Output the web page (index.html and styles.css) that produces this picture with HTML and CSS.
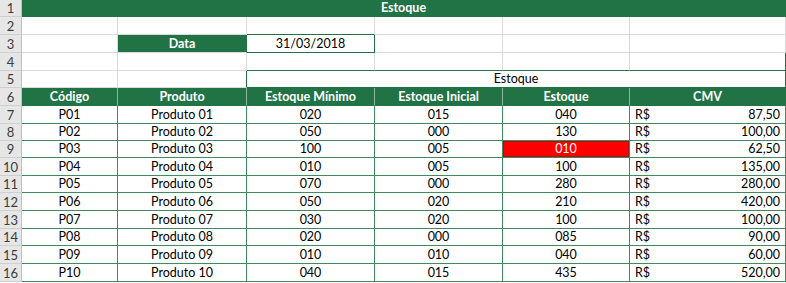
FILE: index.html
```html
<!DOCTYPE html>
<html lang="pt">
<head>
<meta charset="utf-8">
<title>Estoque</title>
<link rel="stylesheet" href="styles.css">
</head>
<body>
<div class="sheet">
  <div class="rh">1</div>
  <div class="c title span6">Estoque</div>

  <div class="rh">2</div>
  <div class="c"></div><div class="c"></div><div class="c gb"></div><div class="c"></div><div class="c"></div><div class="c last"></div>

  <div class="rh">3</div>
  <div class="c"></div>
  <div class="c label">Data</div>
  <div class="c date">31/03/2018</div>
  <div class="c"></div><div class="c"></div><div class="c last"></div>

  <div class="rh">4</div>
  <div class="c"></div><div class="c"></div><div class="c gb"></div><div class="c gb"></div><div class="c gb"></div><div class="c gb gr"></div>

  <div class="rh">5</div>
  <div class="c"></div><div class="c grr"></div>
  <div class="c group span4">Estoque</div>

  <div class="rh">6</div>
  <div class="c th">Código</div>
  <div class="c th">Produto</div>
  <div class="c th">Estoque Mínimo</div>
  <div class="c th">Estoque Inicial</div>
  <div class="c th">Estoque</div>
  <div class="c th thl">CMV</div>

  <div class="rh">7</div>
  <div class="c td">P01</div><div class="c td">Produto 01</div><div class="c td">020</div><div class="c td">015</div><div class="c td">040</div>
  <div class="c td money"><span>R$</span><span>87,50</span></div>

  <div class="rh">8</div>
  <div class="c td">P02</div><div class="c td">Produto 02</div><div class="c td">050</div><div class="c td">000</div><div class="c td">130</div>
  <div class="c td money"><span>R$</span><span>100,00</span></div>

  <div class="rh">9</div>
  <div class="c td">P03</div><div class="c td">Produto 03</div><div class="c td">100</div><div class="c td">005</div><div class="c td alert">010</div>
  <div class="c td money"><span>R$</span><span>62,50</span></div>

  <div class="rh">10</div>
  <div class="c td">P04</div><div class="c td">Produto 04</div><div class="c td">010</div><div class="c td">005</div><div class="c td">100</div>
  <div class="c td money"><span>R$</span><span>135,00</span></div>

  <div class="rh">11</div>
  <div class="c td">P05</div><div class="c td">Produto 05</div><div class="c td">070</div><div class="c td">000</div><div class="c td">280</div>
  <div class="c td money"><span>R$</span><span>280,00</span></div>

  <div class="rh">12</div>
  <div class="c td">P06</div><div class="c td">Produto 06</div><div class="c td">050</div><div class="c td">020</div><div class="c td">210</div>
  <div class="c td money"><span>R$</span><span>420,00</span></div>

  <div class="rh">13</div>
  <div class="c td">P07</div><div class="c td">Produto 07</div><div class="c td">030</div><div class="c td">020</div><div class="c td">100</div>
  <div class="c td money"><span>R$</span><span>100,00</span></div>

  <div class="rh">14</div>
  <div class="c td">P08</div><div class="c td">Produto 08</div><div class="c td">020</div><div class="c td">000</div><div class="c td">085</div>
  <div class="c td money"><span>R$</span><span>90,00</span></div>

  <div class="rh">15</div>
  <div class="c td">P09</div><div class="c td">Produto 09</div><div class="c td">010</div><div class="c td">010</div><div class="c td">040</div>
  <div class="c td money"><span>R$</span><span>60,00</span></div>

  <div class="rh">16</div>
  <div class="c td">P10</div><div class="c td">Produto 10</div><div class="c td">040</div><div class="c td">015</div><div class="c td">435</div>
  <div class="c td money"><span>R$</span><span>520,00</span></div>
</div>
</body>
</html>
```

FILE: styles.css
```css
* { box-sizing: border-box; }

html, body {
  margin: 0;
  padding: 0;
  background: #ffffff;
}

body {
  font-family: Lato, "Liberation Sans", sans-serif;
  font-size: 12.5px;
  color: #000;
}

.sheet {
  display: grid;
  width: 786px;
  grid-template-columns: 22px 96px 129px 128px 128px 127px 156px;
  grid-template-rows: 17px 18px 18px 18px 17px 18px 18px 17px 17px 18px 17px 18px 18px 17px 18px 18px;
  background: #ffffff;
}

.rh {
  background: #e6e6e6;
  color: #3c3c3c;
  border-bottom: 1px solid #cfcfcf;
  border-right: 1px solid #b8c4bc;
  display: flex;
  align-items: center;
  justify-content: center;
  font-size: 13px;
  line-height: 1;
  padding-top: 1px;
}

.c {
  border-right: 1px solid #d9d9d9;
  border-bottom: 1px solid #d9d9d9;
  display: flex;
  align-items: center;
  justify-content: center;
  white-space: nowrap;
  line-height: 1;
  overflow: hidden;
  padding-top: 1px;
}

.span6 { grid-column: span 6; }
.span4 { grid-column: span 4; }

.title {
  background: #217346;
  color: #ffffff;
  font-weight: bold;
  border-color: #217346;
}

.label {
  background: #217346;
  color: #ffffff;
  font-weight: bold;
  border-right-color: #217346;
  border-bottom-color: #d9d9d9;
}

.gb { border-bottom-color: #217346; }
.gr { border-right-color: #217346; }
.grr { border-right-color: #217346; }

.date {
  border-right-color: #217346;
  border-bottom-color: #217346;
}

.group {
  border-right-color: #217346;
  border-bottom-color: #217346;
}

.th {
  background: #217346;
  color: #ffffff;
  font-weight: bold;
  border-right-color: #8fb49e;
  border-bottom-color: #217346;
}

.th.thl { border-right-color: #217346; }

.td {
  border-right-color: #3f8a5e;
  border-bottom-color: #3f8a5e;
}

.alert {
  background: #ff0000;
  color: #ffffff;
  box-shadow: inset 0 0 0 1px rgba(60, 40, 40, 0.45);
}

.money {
  justify-content: space-between;
  padding: 1px 5px 0 5px;
}
```
